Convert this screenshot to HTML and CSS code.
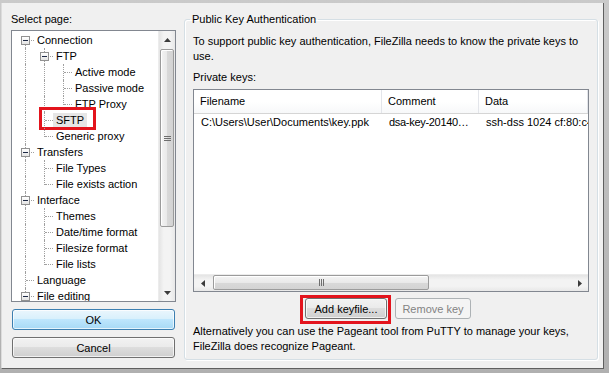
FILE: index.html
```html
<!DOCTYPE html>
<html lang="en">
<head>
  <meta charset="UTF-8">
  <title>Settings - SFTP</title>
  <link rel="stylesheet" href="styles.css">
</head>
<body>
  <div class="dialog">
    <div class="side">
      <div class="caption">Select page:</div>
      <div class="tree">
        <div class="tree-rows">
          <div class="row"><span class="g first"><i class="exp"></i></span><span class="lbl">Connection</span></div>
          <div class="row"><span class="g pipe"></span><span class="g tee"><i class="exp"></i></span><span class="lbl">FTP</span></div>
          <div class="row"><span class="g pipe"></span><span class="g pipe"></span><span class="g tee"></span><span class="lbl">Active mode</span></div>
          <div class="row"><span class="g pipe"></span><span class="g pipe"></span><span class="g tee"></span><span class="lbl">Passive mode</span></div>
          <div class="row"><span class="g pipe"></span><span class="g pipe"></span><span class="g elbow"></span><span class="lbl">FTP Proxy</span></div>
          <div class="row"><span class="g pipe"></span><span class="g tee"></span><span class="lbl selected marked">SFTP</span></div>
          <div class="row"><span class="g pipe"></span><span class="g elbow"></span><span class="lbl">Generic proxy</span></div>
          <div class="row"><span class="g tee"><i class="exp"></i></span><span class="lbl">Transfers</span></div>
          <div class="row"><span class="g pipe"></span><span class="g tee"></span><span class="lbl">File Types</span></div>
          <div class="row"><span class="g pipe"></span><span class="g elbow"></span><span class="lbl">File exists action</span></div>
          <div class="row"><span class="g tee"><i class="exp"></i></span><span class="lbl">Interface</span></div>
          <div class="row"><span class="g pipe"></span><span class="g tee"></span><span class="lbl">Themes</span></div>
          <div class="row"><span class="g pipe"></span><span class="g tee"></span><span class="lbl">Date/time format</span></div>
          <div class="row"><span class="g pipe"></span><span class="g tee"></span><span class="lbl">Filesize format</span></div>
          <div class="row"><span class="g pipe"></span><span class="g elbow"></span><span class="lbl">File lists</span></div>
          <div class="row"><span class="g tee"></span><span class="lbl">Language</span></div>
          <div class="row"><span class="g tee"><i class="exp"></i></span><span class="lbl">File editing</span></div>
        </div>
        <div class="vscroll">
          <div class="arrow">
            <svg width="7" height="4" viewBox="0 0 7 4"><polygon points="0,4 7,4 3.5,0" fill="#3b3b3b"/></svg>
          </div>
          <div class="vtrack">
            <div class="vthumb">
              <svg width="7" height="5" viewBox="0 0 7 5"><path d="M0 0.5H7M0 2.5H7M0 4.5H7" stroke="#6e6e6e" stroke-width="1"/></svg>
            </div>
          </div>
          <div class="arrow">
            <svg width="7" height="4" viewBox="0 0 7 4"><polygon points="0,0 7,0 3.5,4" fill="#3b3b3b"/></svg>
          </div>
        </div>
      </div>
      <button class="btn default">OK</button>
      <button class="btn">Cancel</button>
    </div>

    <fieldset class="group">
      <legend>Public Key Authentication</legend>
      <div class="intro">To support public key authentication, FileZilla needs to know the private keys to use.</div>
      <div class="keys-label">Private keys:</div>
      <div class="list">
        <div class="list-head">
          <div class="col c1">Filename</div>
          <div class="col c2">Comment</div>
          <div class="col c3">Data</div>
        </div>
        <div class="list-body">
          <div class="list-row">
            <div class="cell c1">C:\Users\User\Documents\key.ppk</div>
            <div class="cell c2">dsa-key-20140…</div>
            <div class="cell c3">ssh-dss 1024 cf:80:c4:9e:21:0b</div>
          </div>
        </div>
        <div class="hscroll">
          <div class="arrow">
            <svg width="4" height="7" viewBox="0 0 4 7"><polygon points="4,0 4,7 0,3.5" fill="#3b3b3b"/></svg>
          </div>
          <div class="htrack">
            <div class="hthumb">
              <svg width="5" height="7" viewBox="0 0 5 7"><path d="M0.5 0V7M2.5 0V7M4.5 0V7" stroke="#6e6e6e" stroke-width="1"/></svg>
            </div>
          </div>
          <div class="arrow">
            <svg width="4" height="7" viewBox="0 0 4 7"><polygon points="0,0 0,7 4,3.5" fill="#3b3b3b"/></svg>
          </div>
        </div>
      </div>
      <div class="actions">
        <button class="btn add marked">Add keyfile...</button>
        <button class="btn remove" disabled>Remove key</button>
      </div>
      <div class="note">Alternatively you can use the Pageant tool from PuTTY to manage your keys, FileZilla does recognize Pageant.</div>
    </fieldset>
  </div>
</body>
</html>
```

FILE: styles.css
```css
* {
  box-sizing: border-box;
}

html,
body {
  margin: 0;
  padding: 0;
}

body {
  width: 609px;
  height: 373px;
  overflow: hidden;
  background: linear-gradient(#cacaca, #b0b0b0);
  font: 11px 'Liberation Sans', Arial, sans-serif;
  color: #000;
}

.dialog {
  display: flex;
  gap: 8px;
  width: 603px;
  height: 366px;
  margin: 3px 0 0 1px;
  padding: 9px 5px 0 9px;
  background: #f0f0f0;
  border-left: 1px solid #dcdcdc;
  border-right: 1px solid #5f5f5f;
  border-bottom: 1px solid #5f5f5f;
}

/* left column */

.side {
  display: flex;
  flex-direction: column;
  width: 165px;
  flex: none;
}

.caption {
  line-height: 15px;
  height: 15px;
}

.tree {
  display: flex;
  height: 272px;
  margin-top: 3px;
  background: #fff;
  border: 1px solid #828790;
}

.tree-rows {
  flex: 1;
  padding: 1px 0 0 3px;
  overflow: hidden;
}

.row {
  display: flex;
  height: 16px;
  white-space: nowrap;
}

.g {
  position: relative;
  width: 19px;
  height: 16px;
  flex: none;
}

.g::before,
.g::after {
  content: '';
  position: absolute;
}

.pipe::before,
.tee::before {
  left: 10px;
  top: 0;
  bottom: 0;
  border-left: 1px dotted #a0a0a0;
}

.elbow::before {
  left: 10px;
  top: 0;
  height: 9px;
  border-left: 1px dotted #a0a0a0;
}

.first::before {
  left: 10px;
  top: 8px;
  bottom: 0;
  border-left: 1px dotted #a0a0a0;
}

.tee::after,
.elbow::after,
.first::after {
  left: 11px;
  right: 0;
  top: 8px;
  border-top: 1px dotted #a0a0a0;
}

.pipe::after {
  display: none;
}

.exp {
  position: absolute;
  z-index: 1;
  left: 6px;
  top: 4px;
  width: 9px;
  height: 9px;
  border: 1px solid #919191;
  background: linear-gradient(#fff, #e4e4e4);
}

.exp::after {
  content: '';
  position: absolute;
  left: 1px;
  top: 3px;
  width: 5px;
  border-top: 1px solid #1e2a46;
}

.lbl {
  position: relative;
  height: 14px;
  margin-top: 1px;
  padding: 0 3px;
  line-height: 14px;
}

.lbl.selected {
  background: #e6e6e6;
}

.lbl.marked::after {
  content: '';
  position: absolute;
  left: -14px;
  right: -9px;
  top: -6px;
  bottom: -3px;
  border: 3px solid #e3141d;
}

.vscroll {
  display: flex;
  flex-direction: column;
  width: 17px;
  flex: none;
  background: linear-gradient(to right, #e4e4e4, #f3f3f3 30%, #f3f3f3 70%, #e8e8e8);
  border-left: 1px solid #ececec;
}

.vscroll .arrow {
  display: flex;
  align-items: center;
  justify-content: center;
  height: 17px;
}

.vtrack {
  flex: 1;
  padding: 1px 0 0 1px;
}

.vthumb {
  display: flex;
  align-items: center;
  justify-content: center;
  width: 14px;
  height: 178px;
  border: 1px solid #9b9b9b;
  border-radius: 2px;
  background: linear-gradient(to right, #f4f4f4, #e9e9e9 50%, #d9d9d9 51%, #d3d3d3);
  box-shadow: inset 1px 1px 0 #fff;
}

.btn {
  height: 21px;
  padding: 0;
  font: inherit;
  color: #000;
  border: 1px solid #707070;
  border-radius: 3px;
  background: linear-gradient(#f2f2f2, #ebebeb 45%, #dddddd 50%, #cfcfcf);
  box-shadow: inset 0 0 0 1px rgba(255, 255, 255, 0.7);
}

.side .btn {
  width: 163px;
  margin: 7px 0 0 1px;
}

.btn.default {
  border-color: #3c7fb1;
  background: linear-gradient(#eaf6fd, #d9f0fc 45%, #bee6fd 50%, #a7d9f5);
}

/* right group */

.group {
  position: relative;
  width: 414px;
  height: 348px;
  min-width: 0;
  margin: 0;
  padding: 7px 8px 0;
  border: 1px solid #d5dfe5;
  border-radius: 3px;
  box-shadow: inset 1px 1px 0 #fff, 1px 1px 0 #fff;
}

.group legend {
  margin-left: -3px;
  padding: 0 2px;
  line-height: 15px;
}

.intro,
.keys-label,
.note {
  line-height: 15px;
}

.keys-label {
  margin-top: 6px;
}

.list {
  display: flex;
  flex-direction: column;
  height: 203px;
  margin-top: 4px;
  background: #fff;
  border: 1px solid #828790;
  overflow: hidden;
}

.list-head {
  display: flex;
  height: 24px;
  flex: none;
  background: linear-gradient(#fff, #fff 50%, #f7f8f9);
  border-bottom: 1px solid #d5d5d5;
}

.col {
  padding-left: 6px;
  line-height: 23px;
  border-right: 1px solid #e3e5ea;
  white-space: nowrap;
}

.c1 {
  width: 188px;
  flex: none;
}

.c2 {
  width: 97px;
  flex: none;
}

.c3 {
  flex: 1;
}

.list-body {
  flex: 1;
}

.list-row {
  display: flex;
  height: 17px;
  line-height: 17px;
  white-space: nowrap;
}

.cell {
  padding-left: 7px;
  overflow: hidden;
}

.cell.c2 {
  overflow: visible;
  letter-spacing: -0.3px;
}

.hscroll {
  display: flex;
  height: 17px;
  flex: none;
  background: linear-gradient(#e4e4e4, #f3f3f3 30%, #f3f3f3 70%, #e8e8e8);
  border-top: 1px solid #ececec;
}

.hscroll .arrow {
  display: flex;
  align-items: center;
  justify-content: center;
  width: 17px;
}

.htrack {
  flex: 1;
  padding: 0 0 0 2px;
}

.hthumb {
  display: flex;
  align-items: center;
  justify-content: center;
  width: 216px;
  height: 15px;
  border: 1px solid #9b9b9b;
  border-radius: 2px;
  background: linear-gradient(#f4f4f4, #e9e9e9 50%, #d9d9d9 51%, #d3d3d3);
  box-shadow: inset 1px 1px 0 #fff;
}

.actions {
  display: flex;
  justify-content: center;
  gap: 8px;
  margin-top: 6px;
  padding-right: 6px;
}

.btn.add {
  position: relative;
  width: 82px;
}

.btn.add.marked::after {
  content: '';
  position: absolute;
  left: -6px;
  right: -5px;
  top: -4px;
  bottom: -6px;
  border: 3px solid #e3141d;
}

.btn.remove {
  width: 76px;
  color: #838383;
  border-color: #adb2b5;
  background: #f4f4f4;
  box-shadow: none;
}

.note {
  margin-top: 5px;
}
```
